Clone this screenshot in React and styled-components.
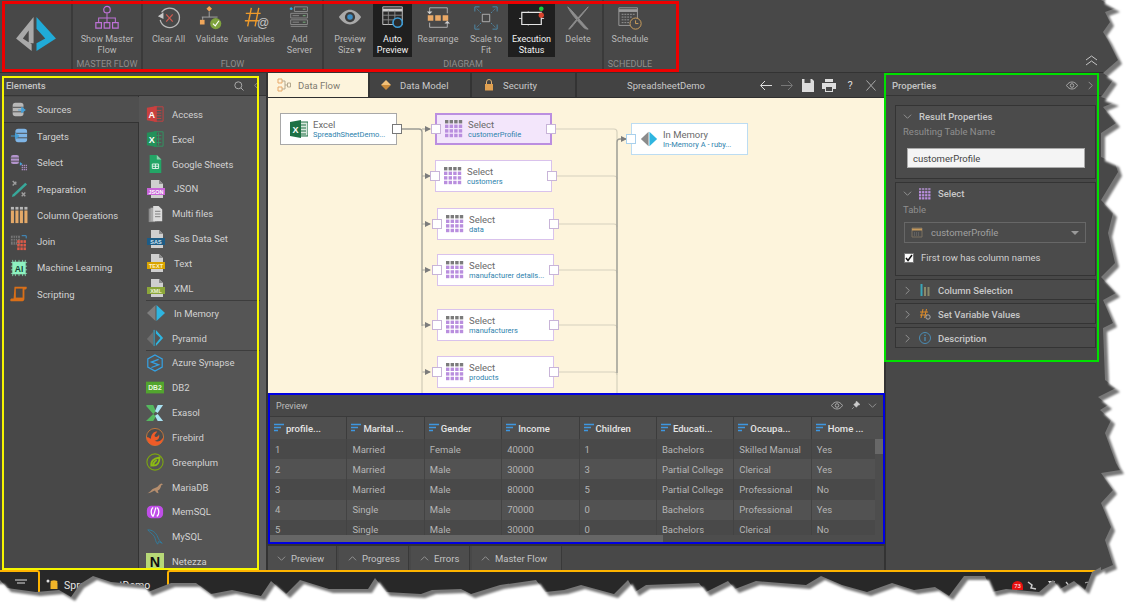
import React from 'react'
import styled, { createGlobalStyle } from 'styled-components'

const GlobalStyle = createGlobalStyle`
  html, body { margin: 0; padding: 0; background: #fff; }
  body { font-family: Roboto, "Noto Sans", sans-serif; font-size: 9.5px; color: #ccc; }
  * { box-sizing: border-box; }
`

const Page = styled.div`
  position: relative;
  width: 1133px;
  height: 610px;
  overflow: hidden;
  background: #484848;
  display: flex;
  flex-direction: column;
`

/* ribbon */
const Ribbon = styled.div`
  height: 72px;
  flex-shrink: 0;
  display: flex;
  background: #484848;
  position: relative;
`
const LogoCell = styled.div`
  width: 73px;
  display: flex;
  align-items: center;
  justify-content: center;
  border-right: 2px solid #3a3a3a;
  padding: 0 0 4px 1px;
`
const Group = styled.div`
  width: ${p => p.$w}px;
  display: flex;
  flex-direction: column;
  border-right: ${p => (p.$last ? 'none' : '2px solid #3a3a3a')};
`
const GroupButtons = styled.div`
  flex: 1;
  display: flex;
  padding-left: ${p => p.$pad || 0}px;
`
const GroupLabel = styled.div`
  height: 15px;
  text-align: center;
  font-size: 9px;
  color: #8e8e8e;
  line-height: 14px;
`
const RibbonButton = styled.div`
  width: ${p => p.$w}px;
  height: 54px;
  margin-top: 3px;
  display: flex;
  flex-direction: column;
  align-items: center;
  text-align: center;
  padding-top: 2px;
  line-height: 10.5px;
  font-size: 9px;
  color: ${p => (p.$on ? '#f2f2f2' : '#b9b9b9')};
  background: ${p => (p.$on ? '#1f1f1f' : 'transparent')};
  svg { flex-shrink: 0; margin-bottom: 3px; }
`
const CollapseRibbon = styled.div`
  position: absolute;
  right: 35px;
  bottom: 6px;
  line-height: 0;
`

/* main three columns */
const Body = styled.div`
  flex: 1;
  min-height: 0;
  display: flex;
  border-top: 1px solid #333;
`

/* elements */
const Elements = styled.aside`
  width: 268px;
  flex-shrink: 0;
  display: flex;
  flex-direction: column;
  padding-left: 4px;
  border-right: 2px solid #333;
`
const PanelHead = styled.div`
  height: 23px;
  flex-shrink: 0;
  display: flex;
  align-items: center;
  justify-content: space-between;
  padding: 3px 5px 0 2px;
  font-size: 9.5px;
  font-weight: 500;
  color: #c4c4c4;
  border-bottom: 1px solid #353535;
`
const HeadTools = styled.div`
  display: flex;
  align-items: center;
  gap: 8px;
`
const ElementsBody = styled.div`
  flex: 1;
  min-height: 0;
  display: flex;
`
const CategoryList = styled.div`
  width: 135px;
  flex-shrink: 0;
  padding-top: 1px;
  border-right: 1px solid #333;
`
const Category = styled.div`
  height: 26.3px;
  display: flex;
  align-items: center;
  gap: 9px;
  padding-left: 6px;
  font-size: 9.5px;
  color: #d2d2d2;
  background: ${p => (p.$on ? '#4f4f4f' : 'transparent')};
  border-bottom: ${p => (p.$on ? '1px solid #333' : 'none')};
  margin-right: ${p => (p.$on ? '-1px' : 0)};
`
const SourceList = styled.div`
  flex: 1;
  background: #555;
  padding: 6px 0 0 7px;
  overflow: hidden;
  border-right: 6px solid #5f5f5f;
`
const SourceRow = styled.div`
  height: 24.85px;
  display: flex;
  align-items: center;
  gap: 8px;
  font-size: 9.5px;
  color: #d2d2d2;
  svg { flex-shrink: 0; }
`
const SourceRule = styled.div`
  height: 1px;
  margin: -0.5px 0 -0.5px 0;
  background: #3d3d3d;
`

/* center */
const Center = styled.main`
  width: 616px;
  flex-shrink: 0;
  display: flex;
  flex-direction: column;
`
const TabBar = styled.div`
  height: 25px;
  flex-shrink: 0;
  display: flex;
  background: #434343;
  border-bottom: 1px solid #2f2f2f;
`
const DocTab = styled.div`
  width: ${p => p.$w}px;
  display: flex;
  align-items: center;
  gap: ${p => p.$gap || 7}px;
  padding-left: ${p => p.$pad || 9}px;
  font-size: 9.5px;
  color: ${p => (p.$on ? '#7d7a70' : '#c9c9c9')};
  background: ${p => (p.$on ? '#fdf4dc' : '#434343')};
  border-right: 2px solid #333;
`
const DocTitle = styled.div`
  flex: 1;
  display: flex;
  align-items: center;
  justify-content: space-between;
  padding: 0 6px 0 50px;
  font-size: 9.5px;
  color: #c9c9c9;
`
const DocTools = styled.div`
  display: flex;
  align-items: center;
  gap: 7px;
  svg { display: block; }
`
const HelpMark = styled.span`
  width: 14px;
  text-align: center;
  font-size: 11px;
  color: #ddd;
`
const Canvas = styled.div`
  position: relative;
  height: 295px;
  flex-shrink: 0;
  overflow: hidden;
  background: #fdf4dc;
`
const Wires = styled.svg`
  position: absolute;
  left: 0;
  top: 0;
`
const Node = styled.div`
  position: absolute;
  left: ${p => p.$x}px;
  top: ${p => p.$y}px;
  width: 117px;
  height: 32px;
  display: flex;
  align-items: center;
  gap: 5px;
  padding-left: ${p => p.$pad || 8}px;
  background: ${p => (p.$on ? '#f3e6fb' : '#fff')};
  border: ${p => (p.$on ? '2px' : '1px')} solid ${p => p.$edge};
`
const NodeText = styled.div`
  min-width: 0;
  margin-top: 1px;
  line-height: 9.5px;
  color: #6a6a6a;
  font-size: 9.5px;
`
const NodeSub = styled.div`
  font-size: 7.5px;
  color: #2e83ad;
  white-space: nowrap;
`
const Port = styled.span`
  position: absolute;
  top: 50%;
  ${p => p.$side}: -6px;
  width: 10px;
  height: 10px;
  margin-top: -5px;
  background: #fff;
  border: 1px solid ${p => p.$edge};
`
const Preview = styled.section`
  height: 151px;
  flex-shrink: 0;
  display: flex;
  flex-direction: column;
  padding-top: 2px;
  background: #333;
`
const PreviewHead = styled.div`
  height: 22px;
  flex-shrink: 0;
  display: flex;
  align-items: center;
  justify-content: space-between;
  padding: 0 7px 0 8px;
  background: #484848;
  border-bottom: 1px solid #3a3a3a;
  font-size: 9px;
  color: #bcbcbc;
`
const GridWrap = styled.div`
  position: relative;
  flex: 1;
  min-height: 0;
  overflow: hidden;
  background: #484848;
`
const Row = styled.div`
  display: grid;
  grid-template-columns: repeat(8, 77.4px);
  height: ${p => (p.$head ? 22 : 20.2)}px;
  padding-left: 2px;
  background: ${p => (p.$head ? '#4f4f4f' : p.$alt ? '#525252' : '#494949')};
`
const Cell = styled.div`
  display: flex;
  align-items: center;
  gap: 2px;
  padding-left: ${p => (p.$head ? 4 : 5)}px;
  border-right: 1px solid ${p => (p.$head ? '#3c3c3c' : '#434343')};
  font-size: 9.5px;
  font-weight: ${p => (p.$head ? 500 : 400)};
  color: ${p => (p.$head ? '#e4e4e4' : '#b5b5b5')};
  white-space: nowrap;
`
const VScroll = styled.div`
  position: absolute;
  right: 0;
  top: 22px;
  bottom: 0;
  width: 9px;
  background: #4d4d4d;
  &::before {
    content: "";
    display: block;
    height: 15px;
    background: #686868;
  }
`
const HScroll = styled.div`
  position: absolute;
  left: 2px;
  right: 0;
  bottom: 0;
  height: 9px;
  background: #4d4d4d;
  &::before {
    content: "";
    display: block;
    width: 393px;
    height: 100%;
    background: #666;
  }
`
const BottomTabs = styled.div`
  flex: 1;
  min-height: 0;
  display: flex;
  gap: 2px;
  background: #484848;
  border-top: 2px solid #333;
`
const BottomTab = styled.div`
  width: ${p => p.$w}px;
  display: flex;
  align-items: center;
  gap: 5px;
  padding-left: 9px;
  font-size: 9.5px;
  color: #c4c4c4;
  background: #4d4d4d;
  border-right: 1px solid #393939;
`

/* properties */
const Properties = styled.aside`
  flex: 1;
  display: flex;
  flex-direction: column;
  border-left: 2px solid #333;
`
const PropsColumn = styled.div`
  width: 215px;
`
const PropsHead = styled(PanelHead)`
  height: 23px;
  padding: 2px 6px 0 6px;
`
const Sections = styled.div`
  padding: 9px 5px 0 9px;
  display: flex;
  flex-direction: column;
  gap: 3px;
`
const Section = styled.div`
  background: #4b4b4b;
  border: 1px solid #343434;
  height: ${p => p.$h}px;
  padding: 0 8px 0 7px;
`
const SectionHead = styled.div`
  height: ${p => p.$h || 20}px;
  display: flex;
  align-items: center;
  gap: 7px;
  font-size: 9.5px;
  font-weight: 500;
  color: #c8c8c8;
  svg { flex-shrink: 0; }
`
const FieldLabel = styled.div`
  font-size: 9.5px;
  color: #8f8f8f;
  line-height: 11px;
`
const TextField = styled.div`
  height: 20px;
  margin: 11px 2px 0 4px;
  padding-left: 5px;
  display: flex;
  align-items: center;
  background: #f4f4f4;
  border: 1px solid #aaa;
  color: #444;
  font-size: 9.5px;
`
const SelectField = styled.div`
  height: 21px;
  margin: 7px 1px 0 1px;
  padding: 0 6px;
  display: flex;
  align-items: center;
  gap: 8px;
  border: 1px solid #676767;
  color: #a0a0a0;
  font-size: 9.5px;
`
const Caret = styled.span`
  margin-left: auto;
  width: 0;
  height: 0;
  border: 4px solid transparent;
  border-top: 4px solid #9a9a9a;
  border-bottom: 0;
`
const CheckRow = styled.div`
  display: flex;
  align-items: center;
  gap: 7px;
  margin: 9px 0 0 1px;
  font-size: 9.5px;
  color: #d0d0d0;
`
const CheckBox = styled.span`
  width: 10px;
  height: 10px;
  display: flex;
  align-items: center;
  justify-content: center;
  background: #fafafa;
  border: 1px solid #777;
`

/* task bar at the bottom */
const TaskBar = styled.div`
  height: 40px;
  flex-shrink: 0;
  display: flex;
  background: #282828;
`
const TaskCell = styled.div`
  display: flex;
  gap: 6px;
  align-items: flex-start;
  padding-top: 7px;
  width: ${p => p.$w ? p.$w + 'px' : 'auto'};
  flex: ${p => (p.$w ? 'none' : 1)};
  border-top: ${p => (p.$line ? '2px solid #ffb400' : '2px solid transparent')};
  border-right: ${p => (p.$right ? '2px solid #ffb400' : 'none')};
  border-left: ${p => (p.$left ? '2px solid #ffb400' : 'none')};
  border-top-right-radius: ${p => (p.$right ? '3px' : 0)};
  border-top-left-radius: ${p => (p.$left ? '3px' : 0)};
  padding-left: ${p => p.$pad || 0}px;
  font-size: 10.5px;
  color: #e6e6e6;
`
const Tray = styled.div`
  margin-left: auto;
  margin-right: 40px;
  display: flex;
  align-items: flex-start;
  gap: 10px;
  padding-top: 2px;
`
const Badge = styled.span`
  width: 11px;
  height: 9px;
  margin-right: -6px;
  border-radius: 6px 6px 0 0;
  background: #e81010;
  color: #fff;
  font-size: 6px;
  line-height: 10px;
  text-align: center;
`

/* overlays: the coloured annotation frames and the torn screenshot edge */
const Callout = styled.div`
  position: absolute;
  left: ${p => p.$x}px;
  top: ${p => p.$y}px;
  width: ${p => p.$w}px;
  height: ${p => p.$h}px;
  border: ${p => p.$b || 2}px solid ${p => p.$c};
  pointer-events: none;
`
const Tear = styled.svg`
  position: absolute;
  left: 0;
  top: 0;
`

const rightEdge = '1101,-30 1101,0 1116,8 1105,12 1110,22 1103,32 1108,40 1118,60 1103,73 1113,80 1101,97 1115,102 1103,107 1116,123 1101,133 1101,157 1115,163 1118,172 1101,200 1113,213 1108,233 1115,263 1101,277 1116,293 1103,300 1113,323 1103,328 1105,380 1116,388 1098,397 1108,405 1100,410 1111,420 1105,433 1116,463 1120,470 1101,473 1113,490 1101,503 1111,527 1105,540 1113,565 1101,570'
const bottomEdge = '1101,567 1092,572 1085,590 1074,581 1060,589 1053,580 1039,592 1006,589 992,592 985,576 964,576 949,596 935,587 914,590 892,583 867,592 842,585 821,576 806,585 756,581 735,589 728,581 706,592 699,583 646,585 635,592 628,580 614,594 581,585 564,590 545,592 536,580 500,585 471,594 461,589 432,590 421,594 386,592 375,578 368,589 329,589 300,580 286,594 271,581 261,596 232,590 211,594 196,583 171,583 148,592 143,585 111,582 93,576 80,584 71,597 59,590 36,592 7,588 0,580 -30,580'
const tearShape = `${rightEdge} ${bottomEdge} -30,700 1200,700 1200,-30`

/* drawings */
const Svg = ({ s = 18, w, h, vb = '0 0 20 20', children }) => (
  <svg width={w || s} height={h || s} viewBox={vb} fill="none">{children}</svg>
)

const Chevron = ({ dir = 'down', c = '#9a9a9a', s = 9 }) => {
  const d = { down: 'M1 3l4 4 4-4', up: 'M1 7l4-4 4 4', right: 'M3 1l4 4-4 4', left: 'M7 1L3 5l4 4' }[dir]
  return <svg width={s} height={s} viewBox="0 0 10 10" fill="none"><path d={d} stroke={c} strokeWidth="1" /></svg>
}
const Eye = () => (
  <svg width="12" height="9" viewBox="0 0 12 9" fill="none">
    <path d="M.5 4.5C2 2 4 1 6 1s4 1 5.500 3.500C10 7 8 8 6 8S2 7 .5 4.500z" stroke="#a8a8a8" />
    <circle cx="6" cy="4.500" r="1.800" stroke="#a8a8a8" />
  </svg>
)
const Logo = () => (
  <svg width="41" height="35" viewBox="0 0 42 36">
    <polygon points="18,0 0,22 16,35 16,28 7,22 13,14 13,27 18,27" fill="#a9a9a9" />
    <polygon points="21,0 41,22 21,35 21,27 30,22 21,12" fill="#20abd8" />
  </svg>
)
const GridIcon = ({ s = 18, top = '#7b7b7b', rest = '#b98ede' }) => (
  <svg width={s} height={s} viewBox="0 0 18 18">
    {[0, 1, 2, 3].map(r => [0, 1, 2, 3].map(c => (
      <rect key={`${r}-${c}`} x={c * 4.600} y={r * 4.600} width="3.400" height="3.400" fill={r === 0 ? top : rest} />
    )))}
  </svg>
)
const Cylinder = ({ c, x = 3, y = 2, w = 12, band = '#474747' }) => (
  <g>
    <rect x={x} y={y} width={w} height="15" rx="3" fill={c} />
    <path d={`M${x} ${y + 5}h${w}M${x} ${y + 10}h${w}`} stroke={band} />
  </g>
)
const DocBadge = ({ label, c, fg = '#fff' }) => (
  <Svg s={20}>
    <path d="M5 1h8l4 4v14H5z" fill="#cfcfcf" />
    <path d="M13 1v4h4" fill="#8b8b8b" />
    <rect x="1" y="9" width="18" height="7" fill={c} />
    <text x="10" y="14.800" textAnchor="middle" fontSize="5.500" fontWeight="700" fill={fg} fontFamily="Liberation Sans, sans-serif">{label}</text>
  </Svg>
)

const ribbonIcons = {
  master: (
    <Svg s={26} vb="0 0 28 28">
      <circle cx="14" cy="5" r="3.500" stroke="#bd72d6" strokeWidth="1.300" />
      <path d="M14 9v5M5 19v-5h18v5M14 14v5" stroke="#bd72d6" strokeWidth="1.100" />
      <path d="M2 19h6v6H2zM11 19h6v6h-6zM20 19h6v6h-6z" stroke="#bd72d6" strokeWidth="1.300" />
    </Svg>
  ),
  clear: (
    <Svg s={26} vb="0 0 28 28">
      <path d="M6 8a10.500 10.500 0 1 1-1.500 8" stroke="#b9b9b9" strokeWidth="1.400" />
      <path d="M2 12l6 3 0-7z" fill="#c8c8c8" />
      <path d="M11 10l7 8M18 10l-7 8" stroke="#d05a50" strokeWidth="1.300" />
    </Svg>
  ),
  validate: (
    <Svg s={26} vb="0 0 28 28">
      <path d="M11 1l3 3-3 3-3-3z" fill="#efa65a" />
      <path d="M11 7v6M3 13h17M4 13v3" stroke="#a7a7a7" />
      <rect x="1" y="16" width="5" height="5" fill="#efa65a" />
      <circle cx="18" cy="20" r="6" fill="#7fa33e" />
      <path d="M15 20l2.500 2.500L21.500 17" stroke="#fff" strokeWidth="1.200" />
    </Svg>
  ),
  variables: (
    <Svg s={26} vb="0 0 28 28">
      <path d="M9 3L5 23M17 3L13 23M3 9h16M2 17h15" stroke="#ee9a2a" strokeWidth="1.500" />
      <text x="15" y="24" fontSize="13" fill="#c4c4c4" fontFamily="Liberation Sans, sans-serif">@</text>
    </Svg>
  ),
  server: (
    <Svg s={26} vb="0 0 28 28">
      <path d="M3 4h3M4.500 2.500v3" stroke="#38a7dc" strokeWidth="1.500" />
      <path d="M8 2h14v5H8zM4 9h18v5H4zM4 16h18v5H4zM4 23h18" stroke="#8d8d8d" />
      <path d="M6 11.500h7M6 18.500h7" stroke="#8d8d8d" />
      <path d="M17 4.500h3M17 11.500h3M17 18.500h3" stroke="#7ab47e" />
    </Svg>
  ),
  eye: (
    <Svg s={26} vb="0 0 28 28">
      <path d="M2 13C6 7 10 5 14 5s8 2 12 8c-4 6-8 8-12 8s-8-2-12-8z" fill="#a9a9a9" />
      <circle cx="14" cy="13" r="5.500" fill="#3c3c3c" />
      <circle cx="14" cy="13" r="3" fill="#3c8dc4" />
    </Svg>
  ),
  auto: (
    <Svg s={26} vb="0 0 28 28">
      <path d="M3 2h21v19H3z" stroke="#c9c9c9" fill="#2a2a2a" />
      <path d="M3 5.500h21" stroke="#c9c9c9" strokeWidth="3" />
      <path d="M3 11h21M3 16h21M9 6v15M16 6v15" stroke="#888" />
      <circle cx="19" cy="19" r="5" stroke="#3c9bd5" strokeWidth="1.800" fill="#2a2a2a" />
    </Svg>
  ),
  rearrange: (
    <Svg s={26} vb="0 0 28 28">
      <path d="M5 8V3h19v6M24 19v5H5v-5" stroke="#b5b5b5" />
      <path d="M2 7l3 3 3-3M21 20l3-3 3 3" fill="#cfcfcf" />
      <path d="M3 11h6v6H3zM11 11h6v6h-6zM19 11h6v6h-6z" fill="#e9a866" />
    </Svg>
  ),
  scale: (
    <Svg s={26} vb="0 0 28 28">
      <path d="M2 7V2h5M21 2h5v5M2 21v5h5M26 21v5h-5" stroke="#4e8dad" />
      <path d="M4 4l5 5M24 4l-5 5M4 24l5-5M24 24l-5-5" stroke="#4e8dad" strokeDasharray="1.500 1" />
      <path d="M10 10h8v8h-8z" stroke="#b3b3b3" />
    </Svg>
  ),
  status: (
    <Svg s={26} vb="0 0 28 28">
      <path d="M3 8h21v13H3z" stroke="#e6e6e6" strokeWidth="1.300" />
      <path d="M0 14.500h3M24 14.500h3M10 8v-1M10 21v1" stroke="#e6e6e6" />
      <circle cx="24" cy="4" r="2.500" fill="#27c93f" />
      <circle cx="24" cy="11" r="2.800" fill="#d8442e" />
    </Svg>
  ),
  del: (
    <Svg s={26} vb="0 0 28 28">
      <path d="M3 2c4 3 16 18 22 24-1 0-2 0-4-1C15 19 6 9 3 2zM25 2C21 6 10 18 4 26c1 0 2-1 3-2C14 15 21 8 25 2z" fill="#8e8e8e" stroke="#8e8e8e" />
    </Svg>
  ),
  schedule: (
    <Svg s={26} vb="0 0 28 28">
      <path d="M2 3h20v19H2z" stroke="#9c9c9c" />
      <path d="M2 6h20" stroke="#9c9c9c" strokeWidth="3" />
      <path d="M5 10h14M5 13h11M5 16h9M5 19h9" stroke="#9c9c9c" strokeDasharray="2 1" />
      <circle cx="20" cy="20" r="6" fill="#484848" stroke="#d4a45e" />
      <path d="M20 16.500V20h3" stroke="#d4a45e" />
    </Svg>
  ),
}

const categoryIcons = {
  sources: (
    <Svg><Cylinder c="#b8b8b8" /><path d="M9 10h7M13 7l4 3-4 3z" stroke="#45a0d8" fill="#45a0d8" /></Svg>
  ),
  targets: (
    <Svg><Cylinder c="#7fb5e6" x={6} w={13} /><path d="M1 10h8M6 7l4 3-4 3z" stroke="#45a0d8" fill="#45a0d8" /></Svg>
  ),
  select: (
    <Svg>
      <rect x="1" y="1" width="9" height="10" rx="2.500" fill="#b394cc" />
      <path d="M1 4.500h9M1 8h9" stroke="#474747" />
      <path d="M11 9l3 2-3 2z" fill="#4aa2d6" />
      <g fill="#a88abf">
        {[0, 1, 2].map(r => [0, 1, 2].map(c => <rect key={`${r}${c}`} x={13 + c * 2.200} y={12 + r * 2.300} width="1.500" height="1.500" />))}
      </g>
    </Svg>
  ),
  prep: (
    <Svg>
      <path d="M3 1l4 4M7 2L3 6M13 14l4 4M17 14l-4 4" stroke="#9d9d9d" strokeWidth="1.600" />
      <path d="M17 3l2 2L5 18l-3 1 1-3z" fill="#38a89a" />
    </Svg>
  ),
  columns: (
    <Svg>
      {[1, 6, 11, 16].map(x => (
        <g key={x}><rect x={x} y="1" width="3.400" height="3" fill="#b8b8b8" /><rect x={x} y="5" width="3.400" height="14" fill="#e3a868" /></g>
      ))}
    </Svg>
  ),
  join: (
    <Svg>
      <path d="M1 3h10v10H1z" fill="#777" />
      <path d="M3.500 3v10M6 3v10M8.500 3v10M1 6h10M1 9h10" stroke="#484848" />
      <g fill="#de5a48">{[9, 13, 17].map(y => [8, 11.500, 15].map(x => <rect key={`${x}${y}`} x={x} y={y - 1} width="2.700" height="3" />))}</g>
      <path d="M13 3h5v3" stroke="#3f9bd8" />
    </Svg>
  ),
  ml: (
    <Svg>
      <path d="M3 1v18M6 1v18M10 1v18M14 1v18M17 1v18M1 4h18M1 8h18M1 12h18M1 16h18" stroke="#8ef2c0" strokeWidth=".8" />
      <rect x="3" y="3" width="14" height="14" fill="#8ef2c0" />
      <text x="10" y="14" textAnchor="middle" fontSize="9.500" fontWeight="700" fill="#143" fontFamily="Liberation Sans, sans-serif">AI</text>
    </Svg>
  ),
  script: (
    <Svg>
      <path d="M5 2h13c1 0 1 3-1 3h-1v10c0 2-1 3-2 3H1c-1 0-1-3 1-3h2z" fill="#d96f18" />
      <path d="M6.500 4h7.500v10H6.500z" fill="#484848" />
    </Svg>
  ),
}
const categories = [
  ['Sources', 'sources', true], ['Targets', 'targets'], ['Select', 'select'], ['Preparation', 'prep'],
  ['Column Operations', 'columns'], ['Join', 'join'], ['Machine Learning', 'ml'], ['Scripting', 'script'],
]

const InMemoryIcon = ({ s = 20, flat }) => (
  <Svg s={s}>
    <path d="M9.500 2v16L1 10z" fill={flat ? '#8b8b8b' : '#7f7f7f'} />
    <path d="M10.500 2L19 10l-8.500 8z" fill="#2fb5e0" />
  </Svg>
)
const sources = [
  ['Access', <Svg><path d="M9 2h10v16H9z" fill="none" stroke="#c9403f" /><path d="M11 6h6M11 9h6M11 12h6M11 15h6" stroke="#c9403f" /><path d="M1 3l11-2v18L1 17z" fill="#c9403f" /><text x="6.500" y="14" textAnchor="middle" fontSize="10" fontWeight="700" fill="#fff" fontFamily="Liberation Sans, sans-serif">A</text></Svg>],
  ['Excel', <Svg><path d="M9 2h10v16H9z" fill="none" stroke="#2f9a63" /><path d="M11 6h6M11 10h6M11 14h6M14 3v14" stroke="#2f9a63" /><path d="M1 3l11-2v18L1 17z" fill="#23915a" /><text x="6.500" y="14" textAnchor="middle" fontSize="10" fontWeight="700" fill="#fff" fontFamily="Liberation Sans, sans-serif">X</text></Svg>],
  ['Google Sheets', <Svg><path d="M4 0h8l5 5v15H4z" fill="#23a566" /><path d="M12 0v5h5" fill="#8ed1ad" /><path d="M7 10h7v5H7zM10.500 10v5M7 12.500h7" stroke="#e8f5ee" /></Svg>],
  ['JSON', <DocBadge label="JSON" c="#c864d8" />],
  ['Multi files', <Svg><path d="M3 4h7v15H3z" fill="#8f8f8f" /><path d="M5 3h7v15H5z" fill="#a9a9a9" /><path d="M8 1h6l4 4v13H8z" fill="#dcdcdc" /><path d="M10 7h6M10 10h6M10 13h6" stroke="#777" /></Svg>],
  ['Sas Data Set', <DocBadge label="SAS" c="#1d5c86" fg="#cfe6f4" />],
  ['Text', <DocBadge label="TEXT" c="#d9a400" fg="#fff3c4" />],
  ['XML', <DocBadge label="XML" c="#8ba63a" fg="#eef4d8" />],
  'rule',
  ['In Memory', <InMemoryIcon />],
  ['Pyramid', <Svg><path d="M8 3v15L1 11z" fill="#6e6e6e" /><path d="M11 1v4l5 5-5 6v3l8-9z" fill="#2fb5e0" /><path d="M9 1v18" stroke="#2fb5e0" /></Svg>],
  'rule',
  ['Azure Synapse', <Svg><path d="M10 1l8 4.500v9L10 19l-8-4.500v-9z" stroke="#34a3e6" strokeWidth="1.300" /><path d="M14 6L6 9l8 3-8 3" stroke="#34a3e6" strokeWidth="1.400" /></Svg>],
  ['DB2', <Svg><rect y="3" width="20" height="13" fill="#52a52e" /><text x="10" y="12.500" textAnchor="middle" fontSize="7.500" fontWeight="700" fill="#e8f5df" fontFamily="Liberation Sans, sans-serif">DB2</text></Svg>],
  ['Exasol', <Svg><path d="M1 1h7l3 7-3 3-8-9zM0 19l8-8 3 3-3 5z" fill="#55b85f" /><path d="M19 1h-6l-3 7 3 2zM19 19h-6l-3-6 3-2z" fill="#a9e2f2" /></Svg>],
  ['Firebird', <Svg><circle cx="10" cy="10" r="9.500" fill="#4d4d4d" stroke="#c9793a" /><path d="M.5 10a9.500 9.500 0 0 0 19 0c-3 5-7 6-10 4 4 0 6-3 5-7-1 3-4 4-5 2 0-2 2-3 3-5-4 0-7 3-7 8-2-1-3-2-5-2z" fill="#ef5b28" /></Svg>],
  ['Greenplum', <Svg><circle cx="10" cy="10" r="9" stroke="#7da70f" strokeWidth="1.200" /><path d="M6 15c-1-6 2-9 9-10 0 5-2 9-7 9 0-3 2-5 4-6" stroke="#8dbb13" strokeWidth="2" /></Svg>],
  ['MariaDB', <Svg><path d="M1 17c4-1 5-5 9-6s4-4 7-5l2 1-2 1c-1 4-2 5-4 6l1 3c-2 0-3-1-4-3-3 1-5 3-9 3z" fill="#b58e6e" /></Svg>],
  ['MemSQL', <Svg><rect x="1" y="3" width="18" height="14" rx="5" fill="#c04ee8" /><path d="M8 5c-3 2-3 8 0 10M12 5c3 2 3 8 0 10" stroke="#fff" strokeWidth="1.400" /><path d="M11 5l-3 10" stroke="#fff" strokeWidth="1.300" /></Svg>],
  ['MySQL', <Svg><path d="M2 2c5 0 9 3 11 8 1 3 3 5 5 7l-4-2-1 3c-3-3-2-6-4-9-2-3-5-4-7-7z" stroke="#2c7fa6" strokeWidth=".9" /></Svg>],
  ['Netezza', <Svg><rect x="0" width="20" height="20" fill="#b7d977" /><text x="10" y="16" textAnchor="middle" fontSize="16" fontWeight="900" fill="#111" fontFamily="Liberation Sans, sans-serif">N</text></Svg>],
]

const nodes = [
  { x: 167, y: 15, sub: 'customerProfile', on: true },
  { x: 167, y: 62, sub: 'customers' },
  { x: 169, y: 110, sub: 'data' },
  { x: 169, y: 156, sub: 'manufacturer details...' },
  { x: 169, y: 211, sub: 'manufacturers' },
  { x: 169, y: 258, sub: 'products' },
]

const wireYs = [31, 78, 126, 172, 227, 274]

const columns = ['profile...', 'Marital ...', 'Gender', 'Income', 'Children', 'Educati...', 'Occupa...', 'Home ...']
const rows = [
  ['1', 'Married', 'Female', '40000', '1', 'Bachelors', 'Skilled Manual', 'Yes'],
  ['2', 'Married', 'Male', '30000', '3', 'Partial College', 'Clerical', 'Yes'],
  ['3', 'Married', 'Male', '80000', '5', 'Partial College', 'Professional', 'No'],
  ['4', 'Single', 'Male', '70000', '0', 'Bachelors', 'Professional', 'Yes'],
  ['5', 'Single', 'Male', '30000', '0', 'Bachelors', 'Clerical', 'No'],
]

const SortIcon = () => (
  <svg width="10" height="10" viewBox="0 0 10 10" fill="none">
    <path d="M0 1.500h10M0 4.500h7M0 7.500h4" stroke="#3f97e0" strokeWidth="1.700" />
  </svg>
)

const App = () => {
  return (
    <Page>
      <GlobalStyle />
      <Ribbon>
        <LogoCell><Logo /></LogoCell>
        <Group $w={70}>
          <GroupButtons>
            <RibbonButton $w={68}>{ribbonIcons.master}<span>Show Master<br />Flow</span></RibbonButton>
          </GroupButtons>
          <GroupLabel>MASTER FLOW</GroupLabel>
        </Group>
        <Group $w={181}>
          <GroupButtons $pad={4}>
            <RibbonButton $w={43}>{ribbonIcons.clear}Clear All</RibbonButton>
            <RibbonButton $w={44}>{ribbonIcons.validate}Validate</RibbonButton>
            <RibbonButton $w={44}>{ribbonIcons.variables}Variables</RibbonButton>
            <RibbonButton $w={43}>{ribbonIcons.server}<span>Add<br />Server</span></RibbonButton>
          </GroupButtons>
          <GroupLabel>FLOW</GroupLabel>
        </Group>
        <Group $w={280}>
          <GroupButtons $pad={3}>
            <RibbonButton $w={46}>{ribbonIcons.eye}<span>Preview<br />Size ▾</span></RibbonButton>
            <RibbonButton $w={39} $on>{ribbonIcons.auto}<span>Auto<br />Preview</span></RibbonButton>
            <RibbonButton $w={52}>{ribbonIcons.rearrange}Rearrange</RibbonButton>
            <RibbonButton $w={44}>{ribbonIcons.scale}<span>Scale to<br />Fit</span></RibbonButton>
            <RibbonButton $w={47} $on>{ribbonIcons.status}<span>Execution<br />Status</span></RibbonButton>
            <RibbonButton $w={46}>{ribbonIcons.del}Delete</RibbonButton>
          </GroupButtons>
          <GroupLabel>DIAGRAM</GroupLabel>
        </Group>
        <Group $w={52} $last>
          <GroupButtons>
            <RibbonButton $w={52}>{ribbonIcons.schedule}Schedule</RibbonButton>
          </GroupButtons>
          <GroupLabel>SCHEDULE</GroupLabel>
        </Group>
        <CollapseRibbon>
          <svg width="13" height="11" viewBox="0 0 13 11" fill="none">
            <path d="M1 5l5.500-4L12 5M1 10l5.500-4L12 10" stroke="#c4c4c4" />
          </svg>
        </CollapseRibbon>
      </Ribbon>

      <Body>
        <Elements>
          <PanelHead>
            Elements
            <HeadTools>
              <svg width="10" height="10" viewBox="0 0 10 10" fill="none">
                <circle cx="4.300" cy="4.300" r="3.500" stroke="#aaa" /><path d="M7 7l2.500 2.500" stroke="#aaa" />
              </svg>
              <Chevron dir="left" />
            </HeadTools>
          </PanelHead>
          <ElementsBody>
            <CategoryList>
              {categories.map(([name, icon, on]) => (
                <Category key={name} $on={on}>{categoryIcons[icon]}{name}</Category>
              ))}
            </CategoryList>
            <SourceList>
              {sources.map((item, i) => (
                item === 'rule'
                  ? <SourceRule key={i} />
                  : <SourceRow key={item[0]}>{item[1]}{item[0]}</SourceRow>
              ))}
            </SourceList>
          </ElementsBody>
        </Elements>

        <Center>
          <TabBar>
            <DocTab $w={102} $on>
              <svg width="14" height="14" viewBox="0 0 14 14" fill="none">
                <path d="M1 1h4v4H1zM1 9h4v4H1z" stroke="#e8a868" /><path d="M5 3h3v8H5M8 7h3" stroke="#b5a98f" /><path d="M10.500 5h3v4h-3z" stroke="#b5a98f" />
              </svg>
              Data Flow
            </DocTab>
            <DocTab $w={102} $pad={10} $gap={8}>
              <svg width="12" height="12" viewBox="0 0 12 12"><path d="M6 1l5 5H1z" fill="#f2c078" /><path d="M1 6h10l-5 5z" fill="#c98a3a" /></svg>
              Data Model
            </DocTab>
            <DocTab $w={105} $pad={11} $gap={8}>
              <svg width="12" height="12" viewBox="0 0 12 12" fill="none"><path d="M3.500 5V3a2.500 2.500 0 0 1 5 0v2" stroke="#e0b070" /><rect x="2" y="5" width="8" height="6.500" fill="#e0a050" /></svg>
              Security
            </DocTab>
            <DocTitle>
              SpreadsheetDemo
              <DocTools>
                <svg width="14" height="11" viewBox="0 0 14 11" fill="none"><path d="M13 5.500H2M6 1L1.500 5.500 6 10" stroke="#ddd" /></svg>
                <svg width="14" height="11" viewBox="0 0 14 11" fill="none"><path d="M1 5.500h11M8 1l4.500 4.500L8 10" stroke="#777" /></svg>
                <svg width="14" height="13" viewBox="0 0 14 13"><path d="M1 0h10l2 2v11H1z" fill="#ddd" /><rect x="3.500" y="0" width="6" height="4" fill="#484848" /></svg>
                <svg width="14" height="13" viewBox="0 0 14 13"><path d="M3 0h8v3H3zM0 4h14v6h-3v3H3v-3H0z" fill="#ddd" /><rect x="4" y="8" width="6" height="4" fill="#484848" /></svg>
                <HelpMark>?</HelpMark>
                <svg width="14" height="11" viewBox="0 0 14 11" fill="none"><path d="M2.500 .5l9 10M11.500 .5l-9 10" stroke="#aaa" /></svg>
              </DocTools>
            </DocTitle>
          </TabBar>

          <Canvas>
            <Wires width="616" height="296" viewBox="0 0 616 296" fill="none">
              {wireYs.map(y => (
                <g key={y}>
                  <path d={`M288 ${y}H346a3 3 0 0 1 3 3`} stroke="#d6d0bd" strokeWidth="1.200" />
                  <path d={`M154 ${y}H162`} stroke="#a8a8a0" />
                  <path d={`M157 ${y - 3}l6 3-6 3z`} fill="#7c7c7c" />
                </g>
              ))}
              <path d="M129 31H151a3 3 0 0 1 3 3V228" stroke="#9b9b94" strokeWidth="1.300" />
              <path d="M154 228V296" stroke="#d0cab8" strokeWidth="1.200" />
              <path d="M349 34V296" stroke="#d6d0bd" strokeWidth="1.200" />
              <path d="M349 275V44a3 3 0 0 1 3-3H358" stroke="#9b9b94" strokeWidth="1.300" />
              <path d="M353 38l6 3-6 3z" fill="#7c7c7c" />
            </Wires>
            <Node $x={12} $y={15} $edge="#a8a8a8" $pad={9}>
              <svg width="18" height="18" viewBox="0 0 18 18">
                <path d="M9 2h9v14H9z" fill="#d8e8dd" stroke="#1e7145" />
                <path d="M11 5h5M11 8h5M11 11h5M11 14h5" stroke="#1e7145" />
                <path d="M0 2l11-2v18L0 16z" fill="#1e7145" />
                <text x="5.500" y="12.500" textAnchor="middle" fontSize="9" fontWeight="700" fill="#fff" fontFamily="Liberation Sans, sans-serif">X</text>
              </svg>
              <NodeText>Excel<NodeSub>SpreadhSheetDemo...</NodeSub></NodeText>
              <Port $side="right" $edge="#777" />
            </Node>
            {nodes.map(n => (
              <Node key={n.sub} $x={n.x} $y={n.y} $on={n.on} $edge={n.on ? '#bb8ee0' : '#d9c2ec'}>
                <GridIcon />
                <NodeText>Select<NodeSub>{n.sub}</NodeSub></NodeText>
                <Port $side="left" $edge="#c8b4d8" />
                <Port $side="right" $edge="#c8b4d8" />
              </Node>
            ))}
            <Node $x={363} $y={25} $edge="#bcdcf2">
              <InMemoryIcon s={18} flat />
              <NodeText>In Memory<NodeSub>In-Memory A - ruby...</NodeSub></NodeText>
              <Port $side="left" $edge="#a8d0ec" />
            </Node>
          </Canvas>

          <Preview>
            <PreviewHead>
              Preview
              <HeadTools>
                <Eye />
                <svg width="9" height="9" viewBox="0 0 10 10"><path d="M6 0l4 4-2 .5L6 7 3 4l2.500-2zM3.500 6.500L1 9" fill="#ccc" stroke="#ccc" strokeWidth=".6" /></svg>
                <Chevron dir="down" />
              </HeadTools>
            </PreviewHead>
            <GridWrap>
              <Row $head>
                {columns.map(c => <Cell key={c} $head><SortIcon />{c}</Cell>)}
              </Row>
              {rows.map((r, i) => (
                <Row key={r[0]} $alt={i % 2 === 1}>
                  {r.map((v, j) => <Cell key={j}>{v}</Cell>)}
                </Row>
              ))}
              <VScroll />
              <HScroll />
            </GridWrap>
          </Preview>

          <BottomTabs>
            <BottomTab $w={69}><Chevron dir="down" />Preview</BottomTab>
            <BottomTab $w={70}><Chevron dir="up" />Progress</BottomTab>
            <BottomTab $w={59}><Chevron dir="up" />Errors</BottomTab>
            <BottomTab $w={90}><Chevron dir="up" />Master Flow</BottomTab>
          </BottomTabs>
        </Center>

        <Properties>
          <PropsColumn>
            <PropsHead>
              Properties
              <HeadTools><Eye /><Chevron dir="right" /></HeadTools>
            </PropsHead>
            <Sections>
              <Section $h={74}>
                <SectionHead><Chevron dir="down" />Result Properties</SectionHead>
                <FieldLabel>Resulting Table Name</FieldLabel>
                <TextField>customerProfile</TextField>
              </Section>
              <Section $h={94}>
                <SectionHead $h={21}><Chevron dir="down" /><GridIcon s={12} top="#9a80b0" />Select</SectionHead>
                <FieldLabel>Table</FieldLabel>
                <SelectField>
                  <svg width="12" height="11" viewBox="0 0 12 11" fill="none">
                    <path d="M1 1h10v9H1z" stroke="#7a7060" /><path d="M1 2.500h10" stroke="#c69a5c" strokeWidth="2" /><path d="M3 6h6M3 8h6" stroke="#777" strokeDasharray="1 1" />
                  </svg>
                  customerProfile
                  <Caret />
                </SelectField>
                <CheckRow>
                  <CheckBox>
                    <svg width="8" height="8" viewBox="0 0 8 8" fill="none"><path d="M1 4l2 2.500L7 1" stroke="#111" strokeWidth="1.500" /></svg>
                  </CheckBox>
                  First row has column names
                </CheckRow>
              </Section>
              <Section $h={21}>
                <SectionHead><Chevron dir="right" />
                  <svg width="12" height="12" viewBox="0 0 12 12" fill="none"><path d="M2.500 0v12" stroke="#3aa6b8" strokeWidth="2" /><path d="M6 3v9M9.500 3v9" stroke="#8a8a6a" strokeWidth="2" /></svg>
                  Column Selection
                </SectionHead>
              </Section>
              <Section $h={21}>
                <SectionHead><Chevron dir="right" />
                  <svg width="12" height="12" viewBox="0 0 12 12" fill="none"><path d="M4 1L2 10M7.500 1l-2 9M1 4h8M1 7h7" stroke="#dd8c2a" /><circle cx="9" cy="9" r="2.200" stroke="#aaa" /></svg>
                  Set Variable Values
                </SectionHead>
              </Section>
              <Section $h={21}>
                <SectionHead><Chevron dir="right" />
                  <svg width="12" height="12" viewBox="0 0 12 12" fill="none"><circle cx="6" cy="6" r="5.500" stroke="#4b8db5" /><path d="M6 5v4M6 2.500v1.500" stroke="#4b8db5" strokeWidth="1.300" /></svg>
                  Description
                </SectionHead>
              </Section>
            </Sections>
          </PropsColumn>
        </Properties>
      </Body>

      <TaskBar>
        <TaskCell $w={40} $line $right $pad={15}>
          <svg width="12" height="8" viewBox="0 0 12 8" fill="none"><path d="M0 1h12M2 4h8" stroke="#ddd" /></svg>
        </TaskCell>
        <TaskCell $w={127} $pad={6}>
          <svg width="12" height="11" viewBox="0 0 12 11"><circle cx="2" cy="2" r="1.500" fill="#ddd" /><ellipse cx="8" cy="3" rx="3.500" ry="1.800" fill="#f0b429" /><rect x="4.500" y="4" width="7" height="6" fill="#f0b429" /></svg>
          SpreadsheetDemo
        </TaskCell>
        <TaskCell $line $left>
          <Tray>
            <Badge>73</Badge>
            <svg width="11" height="9" viewBox="0 0 11 9" fill="none"><path d="M1 1l4 3-1 3 5 1" stroke="#ccc" strokeWidth="1.500" /></svg>
            <svg width="7" height="5" viewBox="0 0 7 5"><path d="M0 0h7L3.500 5z" fill="#ddd" /></svg>
            <svg width="9" height="9" viewBox="0 0 9 9" fill="none"><path d="M1 1l5 6" stroke="#ccc" strokeWidth="1.300" /><path d="M5 8h3" stroke="#2fbf3f" strokeWidth="1.300" /></svg>
            <svg width="9" height="9" viewBox="0 0 9 9" fill="none"><path d="M1 2c3-2 6 0 7 6" stroke="#bbb" /></svg>
          </Tray>
        </TaskCell>
      </TaskBar>

      <Callout $x={2} $y={1} $w={677} $h={71} $c="#ee0000" $b={3} />
      <Callout $x={2} $y={76} $w={257} $h={494} $c="#f6f600" />
      <Callout $x={268} $y={393} $w={617} $h={151} $c="#0000e0" />
      <Callout $x={884} $y={73} $w={215} $h={289} $c="#00e000" />

      <Tear width="1133" height="610" viewBox="0 0 1133 610">
        <defs>
          <filter id="soft"><feGaussianBlur stdDeviation="1.100" /></filter>
        </defs>
        <polygon points={tearShape} fill="#777" />
        <polygon points={tearShape} fill="#fff" transform="translate(4 4)" filter="url(#soft)" />
      </Tear>
    </Page>
  )
}

export default App
